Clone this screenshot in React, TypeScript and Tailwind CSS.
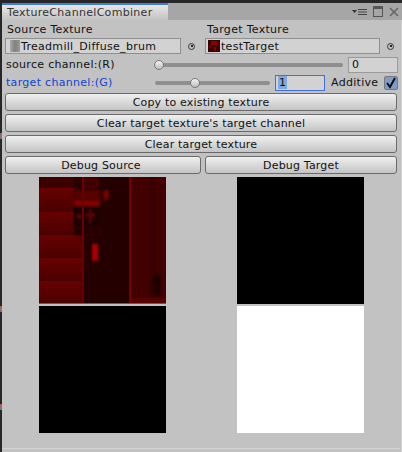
import React from 'react';

const font = { fontFamily: '"DejaVu Sans", Verdana, sans-serif' };

function Picker() {
  return (
    <div className="w-[7px] h-[7px] rounded-full border border-[#333] flex items-center justify-center">
      <div className="w-[2px] h-[2px] bg-[#222]" />
    </div>
  );
}

function Btn({ label, className = '' }: { label: string; className?: string }) {
  return (
    <button className={`h-[18px] flex items-center justify-center rounded-[3px] border border-[#6b6b6b] bg-gradient-to-b from-[#f0f0f0] to-[#c4c4c4] text-[11px] leading-none tracking-[0.18px] text-[#111] ${className}`}>
      {label}
    </button>
  );
}

function Thumb() {
  return <div className="absolute top-1/2 -translate-y-1/2 w-[10px] h-[10px] rounded-full border border-[#777] bg-gradient-to-b from-[#f4f4f4] to-[#bdbdbd]" />;
}

function SourceTexture() {
  const stripes = [11, 35, 58, 81, 104];
  return (
    <svg viewBox="0 0 127 127" className="w-[127px] h-[127px] block">
      <defs>
        <linearGradient id="stripe" x1="0" y1="0" x2="0" y2="1">
          <stop offset="0" stopColor="#680000" />
          <stop offset="1" stopColor="#4a0000" />
        </linearGradient>
        <filter id="soft"><feGaussianBlur stdDeviation="1.5" /></filter>
        <filter id="softer"><feGaussianBlur stdDeviation="0.8" /></filter>
      </defs>
      <rect width="127" height="127" fill="#3c0000" />
      <rect width="44" height="11" fill="#3d0000" />
      {stripes.map((y) => (
        <rect key={y} y={y} width="44" height="23" fill="url(#stripe)" />
      ))}
      <rect x="44" width="46" height="127" fill="#240000" />
      <rect x="35" y="0" width="27" height="58" fill="#2a0000" />
      <g filter="url(#softer)">
        <rect x="44" y="1" width="15" height="10" fill="#560000" />
        <rect x="46" y="3" width="11" height="6" fill="#3a0000" />
        <rect x="35" y="13" width="26" height="16" fill="#560000" />
        <rect x="35" y="24" width="26" height="5" fill="#850000" />
        <rect x="35" y="30" width="26" height="19" fill="#1a0000" />
        <rect x="38" y="38" width="6" height="3" fill="#660000" />
        <rect x="47" y="37" width="9" height="2" fill="#6c0000" />
        <rect x="50" y="33" width="2" height="13" fill="#600000" />
        <rect x="36" y="51" width="25" height="7" fill="#220000" stroke="#380000" strokeWidth="1" />
        <rect x="53" y="67" width="6" height="17" fill="#a80000" />
        <ellipse cx="67" cy="18" rx="3" ry="5.5" fill="#780000" />
      </g>
      <rect x="43" width="2" height="127" fill="#680000" />
      <rect x="90" width="2" height="127" fill="#760000" />
      <rect x="92" width="35" height="127" fill="#420000" />
      <rect x="110" width="7" height="122" fill="#380000" />
      <rect x="92" y="121" width="35" height="6" fill="#560000" />
      <ellipse cx="118" cy="108" rx="4" ry="12" fill="#1c0000" filter="url(#soft)" />
      <rect y="126" width="127" height="1" fill="#7a5050" />
    </svg>
  );
}

export default function App() {
  return (
    <div style={font} className="relative w-[402px] h-[452px] bg-[#272727] overflow-hidden flex flex-col pt-[3px] pl-[2px]">
      <div className="absolute left-0 top-[133px] w-[2px] h-[6px] bg-gradient-to-b from-[#c2502a] to-[#4f7fa8]" />
      <div className="absolute left-0 top-[306px] w-[2px] h-[6px] bg-gradient-to-b from-[#c2502a] to-[#4f7fa8]" />
      <div className="absolute left-0 top-[404px] w-[2px] h-[6px] bg-gradient-to-b from-[#c2502a] to-[#4f7fa8]" />

      <div className="h-[17px] shrink-0 flex bg-[#a6a6a6]">
        <div className="w-[166px] h-[17px] border-t-2 border-[#3e7ce0] bg-gradient-to-b from-[#e8e8e8] to-[#c2c2c2] pl-[5px] text-[11px] leading-[15px] tracking-[0.3px] text-[#333]">
          TextureChannelCombiner
        </div>
        <div className="flex-1 flex items-center justify-end gap-[6px] pr-[3px]">
          <svg width="15" height="8" viewBox="0 0 15 8">
            <path d="M0 2h5L2.500 5z" fill="#333" />
            <path d="M6 1.500h9M6 4h9M6 6.500h9" stroke="#444" strokeWidth="1" />
          </svg>
          <div className="w-[10px] h-[11px] border border-[#555] border-t-[3px]" />
          <svg width="10" height="10" viewBox="0 0 10 10">
            <path d="M1 1l8 8M9 1l-8 8" stroke="#666" strokeWidth="1.6" />
          </svg>
        </div>
      </div>

      <div className="flex-1 bg-[#c2c2c2] border-r border-[#d4d4d4] pl-[3px] pr-[4px] flex flex-col text-[11px] tracking-[0.3px] text-[#111]">
        <div className="flex h-[32px] mt-[2px] gap-[5px]">
          <div className="w-[195px] flex flex-col">
            <span className="pl-[2px] h-[16px] leading-[15px]">Source Texture</span>
            <div className="flex items-center">
              <div className="w-[176px] h-[16px] border border-[#8f8f8f] bg-[#d2d2d2] flex items-center pl-[4px] gap-[1px] leading-none">
                <div className="w-[10px] h-[12px] bg-gradient-to-r from-[#aaa] via-[#7f7f7f] to-[#9a9a9a] shrink-0" />
                Treadmill_Diffuse_brum
              </div>
              <div className="ml-[7px]"><Picker /></div>
            </div>
          </div>
          <div className="flex-1 flex flex-col">
            <span className="pl-[2px] h-[16px] leading-[15px]">Target Texture</span>
            <div className="flex items-center">
              <div className="w-[175px] h-[16px] border border-[#8f8f8f] bg-[#d2d2d2] flex items-center pl-[2px] gap-[1px] leading-none">
                <svg width="12" height="12" viewBox="0 0 12 12" className="shrink-0">
                  <rect width="12" height="12" fill="#3c0000" />
                  <rect x="3" y="1" width="6" height="4" fill="#8a0000" />
                  <rect x="1" y="6" width="3" height="2" fill="#700000" />
                  <rect x="6" y="7" width="2" height="4" fill="#900000" />
                </svg>
                testTarget
              </div>
              <div className="ml-[7px]"><Picker /></div>
            </div>
          </div>
        </div>

        <div className="flex items-center h-[17px] mt-[2px]">
          <span className="w-[150px] shrink-0 pl-[1px] leading-none">source channel:(R)</span>
          <div className="relative w-[188px] shrink-0 h-[4px] rounded-full bg-[#8e8e8e]">
            <div className="absolute -left-[1px] top-0 h-full"><Thumb /></div>
          </div>
          <div className="ml-[5px] w-[50px] shrink-0 h-[16px] border border-[#9a9a9a] bg-[#d2d2d2] pl-[3px] leading-[14px]">0</div>
        </div>

        <div className="flex items-center h-[17px] mt-[1px]">
          <span className="w-[150px] shrink-0 pl-[1px] leading-none text-[#0d45d8]">target channel:(G)</span>
          <div className="relative w-[115px] shrink-0 h-[4px] rounded-full bg-[#8e8e8e]">
            <div className="absolute left-[35px] top-0 h-full"><Thumb /></div>
          </div>
          <div className="ml-[5px] w-[50px] shrink-0 h-[16px] border border-[#3f6fe0] bg-[#d2d2d2] pl-[2px] leading-[14px]">
            <span className="bg-[#7fa8e6] px-[1px]">1</span>
          </div>
          <span className="ml-[6px] w-[53px] shrink-0 leading-none">Additive</span>
          <div className="w-[14px] h-[14px] shrink-0 rounded-[2px] border border-[#777] bg-[#7f9cc8] flex items-center justify-center">
            <svg width="12" height="12" viewBox="0 0 12 12">
              <path d="M2 6l3 4 5-9" fill="none" stroke="#0c0c0c" strokeWidth="2" />
            </svg>
          </div>
        </div>

        <div className="flex flex-col gap-[3px] mt-[2px]">
          <Btn label="Copy to existing texture" />
          <Btn label="Clear target texture's target channel" />
          <Btn label="Clear target texture" />
          <div className="flex gap-[4px]">
            <Btn label="Debug Source" className="w-[196px] pr-[4px]" />
            <Btn label="Debug Target" className="flex-1" />
          </div>
        </div>

        <div className="grid grid-cols-[127px_127px] gap-x-[71px] gap-y-[2px] mt-[3px] ml-[34px]">
          <SourceTexture />
          <div className="h-[127px] bg-black" />
          <div className="h-[127px] bg-black" />
          <div className="h-[127px] bg-white" />
        </div>

        <div className="mt-[15px] h-[1px] bg-[#d4d4d4] -mx-[3px]" />
      </div>
    </div>
  );
}
